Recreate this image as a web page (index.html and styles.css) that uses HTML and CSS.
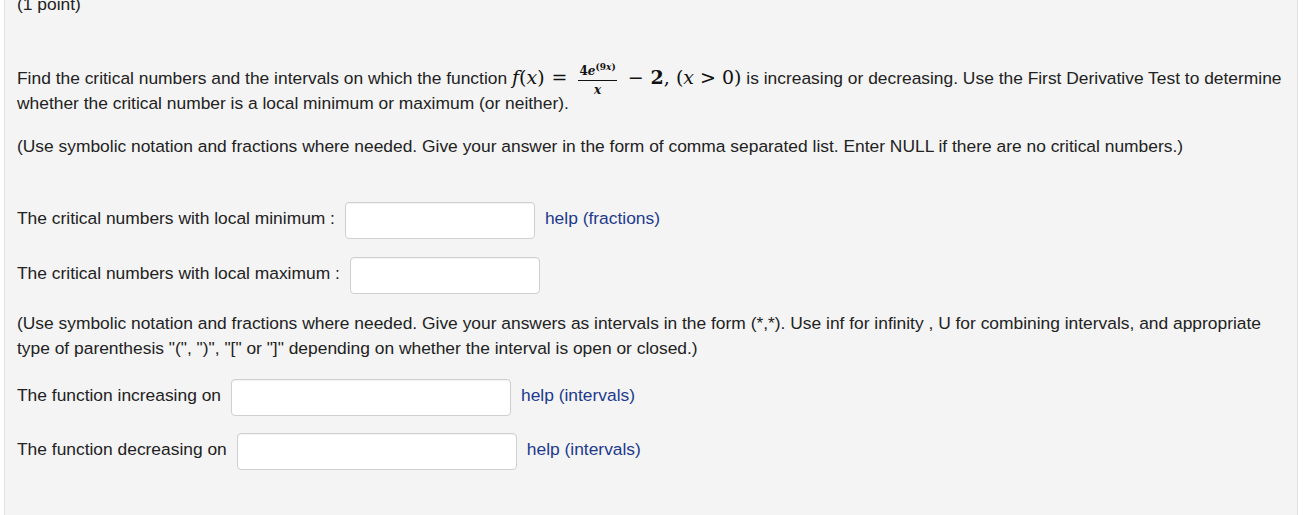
FILE: index.html
```html
<!DOCTYPE html>
<html>
<head>
<meta charset="utf-8">
<link rel="stylesheet" href="styles.css">
</head>
<body>
<div class="panel">
  <div class="points">(1 point)</div>
  <p class="q">Find the critical numbers and the intervals on which the function <span class="m"><i>f</i>(<i>x</i>)</span><span class="m op">=</span><span class="frac"><span class="num">4<i>e</i><sup>(9<i>x</i>)</sup></span><span class="den"><i>x</i></span></span><span class="m op">−</span><span class="m"><b>2</b>, (<i>x</i> &gt; 0)</span> is increasing or decreasing. Use the First Derivative Test to determine whether the critical number is a local minimum or maximum (or neither).</p>
  <p class="note">(Use symbolic notation and fractions where needed. Give your answer in the form of comma separated list. Enter NULL if there are no critical numbers.)</p>
  <div class="row first">
    <span class="label">The critical numbers with local minimum :</span>
    <input class="ans" type="text">
    <a class="help">help (fractions)</a>
  </div>
  <div class="row r2">
    <span class="label">The critical numbers with local maximum :</span>
    <input class="ans" type="text">
  </div>
  <p class="note2">(Use symbolic notation and fractions where needed. Give your answers as intervals in the form (*,*). Use inf for infinity , U for combining intervals, and appropriate type of parenthesis "(", ")", "[" or "]" depending on whether the interval is open or closed.)</p>
  <div class="row r3">
    <span class="label">The function increasing on</span>
    <input class="ans wide" type="text">
    <a class="help">help (intervals)</a>
  </div>
  <div class="row r4">
    <span class="label">The function decreasing on</span>
    <input class="ans wide" type="text">
    <a class="help">help (intervals)</a>
  </div>
</div>
</body>
</html>
```
FILE: styles.css
```css
html, body {
  margin: 0;
  padding: 0;
  background: #ffffff;
  overflow: hidden;
}
body {
  font-family: "Liberation Sans", Arial, sans-serif;
  font-size: 17.4px;
  line-height: 25px;
  color: #222;
}
.panel {
  margin: -8px 0 0 4px;
  width: 1268px;
  height: 560px;
  background: #f4f4f4;
  border: 1px solid #e2e2e2;
  border-top: none;
  padding: 0 12px;
}
.points {
  height: 25px;
}
p {
  margin: 0;
}
.q {
  margin-top: 49px;
}
.m {
  font-family: "DejaVu Serif", "Liberation Serif", serif;
  font-size: 19px;
  line-height: 20px;
  color: #111;
}
.m b { font-weight: bold; }
.op { padding: 0 7px; }
.frac {
  display: inline-flex;
  flex-direction: column;
  align-items: center;
  vertical-align: 9px;
  margin: -30px 4px;
  font-family: "DejaVu Serif", "Liberation Serif", serif;
  font-size: 12px;
  line-height: 12px;
  font-weight: bold;
  color: #111;
}
.frac .num {
  border-bottom: 1px solid #111;
  padding: 0 1px 3px;
}
.frac .num sup {
  font-size: 9px;
  vertical-align: 5px;
  line-height: 0;
}
.frac .den {
  padding-top: 3px;
}
.note {
  margin-top: 18px;
}
.row {
  display: flex;
  align-items: center;
  gap: 10px;
  margin-top: 18px;
}
.row.first { margin-top: 43px; }
.label { position: relative; top: -2px; }
.ans {
  box-sizing: border-box;
  width: 190px;
  height: 37px;
  margin: 0;
  background: #fff;
  border: 1px solid #cfcfcf;
  border-radius: 4px;
  box-shadow: inset 0 1px 1px rgba(0,0,0,0.05);
}
.ans.wide { width: 280px; }
.help {
  color: #1d3a8d;
  text-decoration: none;
  position: relative;
  top: -2px;
}
.note2 {
  margin-top: 17px;
}
.row.r3 { margin-top: 18px; }
.row.r4 { margin-top: 17px; }
```
